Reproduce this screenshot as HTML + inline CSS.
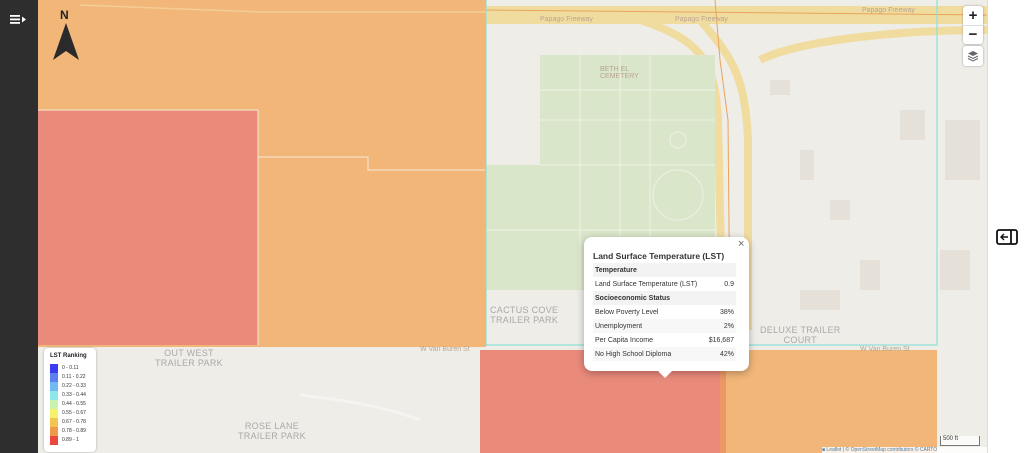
<!DOCTYPE html>
<html><head><meta charset="utf-8"><style>
*{margin:0;padding:0;box-sizing:border-box}
body{width:1025px;height:453px;overflow:hidden;background:#fff;font-family:"Liberation Sans",Arial,sans-serif;position:relative}
.a{position:absolute}
.lbl{position:absolute;font-size:7px;color:#b9a58e}
.big{position:absolute;font-size:9px;color:#a9a9a9;text-align:center;letter-spacing:.3px;line-height:10px}
table{border-collapse:collapse;width:100%;font-size:7px;color:#333}
td{padding:0 2px;height:14px}
tr.h td{font-weight:bold;background:#f3f3f3}
tr.g td{background:#f7f7f7}
td.r{text-align:right}
</style></head><body>
<div class="a" style="left:0;top:0;width:38px;height:453px;background:#2e2e2e"></div>
<svg class="a" style="left:10px;top:14px" width="18" height="12" viewBox="0 0 18 12"><rect x="0" y="1" width="10" height="1.8" fill="#fff"/><rect x="0" y="4.5" width="10" height="1.8" fill="#fff"/><rect x="0" y="8" width="10" height="1.8" fill="#fff"/><path d="M12 2.5L16 5.5L12 8.5Z" fill="#fff"/></svg>

<svg class="a" style="left:38px;top:0" width="949" height="453" viewBox="38 0 949 453">
<rect x="38" y="0" width="949" height="453" fill="#efede8"/>
<rect x="485" y="6" width="502" height="18" fill="#f1dca0"/>
<path d="M640 20 C700 40 715 60 718 120 L722 300 M700 20 C735 60 745 80 748 140 L748 330 M760 60 C800 40 900 30 987 30" stroke="#f1dca0" stroke-width="8" fill="none"/>
<path d="M485 10 L987 15" stroke="#e9a45a" stroke-width="1"/>
<path d="M715 0 L720 60 L728 120 L730 330" stroke="#e9a45a" stroke-width="1" fill="none"/>
<rect x="540" y="55" width="175" height="115" fill="#d9e6c9"/>
<rect x="485" y="165" width="230" height="125" fill="#d9e6c9"/>
<g stroke="#eef2e6" stroke-width="1" fill="none"><circle cx="678" cy="140" r="8"/><circle cx="678" cy="195" r="25"/><path d="M540 90H715M540 120H715M540 165H715M485 230H715M580 55V290M620 55V290M650 55V290"/></g>
<g fill="#e6e1d8"><rect x="770" y="80" width="20" height="15"/><rect x="800" y="150" width="14" height="30"/><rect x="830" y="200" width="20" height="20"/><rect x="900" y="110" width="25" height="30"/><rect x="945" y="120" width="35" height="60"/><rect x="860" y="260" width="20" height="30"/><rect x="800" y="290" width="40" height="20"/><rect x="940" y="250" width="30" height="40"/></g>
<path d="M486 0V345 M937 0V345 M486 345H937" stroke="#8fe0d8" stroke-width="1.2" fill="none"/>
<rect x="38" y="0" width="448" height="347" fill="#f1b678"/>
<rect x="38" y="110" width="220" height="235" fill="#e98a7b"/>
<path d="M38 110H258V345 M258 157H368V170H485" stroke="#f6dfc4" stroke-width="1.2" fill="none"/>
<path d="M80 5L260 12L486 12" stroke="#f4cd95" stroke-width="1.5" fill="none"/>
<rect x="480" y="350" width="245" height="103" fill="#e98a7b"/>
<rect x="725" y="350" width="212" height="103" fill="#f1b678"/>
<rect x="720" y="350" width="6" height="103" fill="#ec9866"/>
<path d="M300 395 C340 400 380 405 420 420" stroke="#f6f4f0" stroke-width="3" fill="none"/>
</svg>

<div class="lbl" style="left:540px;top:16px">Papago Freeway</div>
<div class="lbl" style="left:675px;top:16px">Papago Freeway</div>
<div class="lbl" style="left:862px;top:7px">Papago Freeway</div>
<div class="lbl" style="left:600px;top:66px">BETH EL<br>CEMETERY</div>
<div class="big" style="left:490px;top:305px">CACTUS COVE<br>TRAILER PARK</div>
<div class="big" style="left:760px;top:325px">DELUXE TRAILER<br>COURT</div>
<div class="big" style="left:155px;top:348px">OUT WEST<br>TRAILER PARK</div>
<div class="big" style="left:238px;top:421px">ROSE LANE<br>TRAILER PARK</div>
<div class="lbl" style="left:420px;top:346px">W Van Buren St</div>
<div class="lbl" style="left:860px;top:346px">W Van Buren St</div>

<div class="a" style="left:60px;top:8px;font-weight:bold;font-size:12px;color:#222">N</div>
<svg class="a" style="left:50px;top:22px" width="32" height="40" viewBox="0 0 32 40"><path d="M16 1L29 38L16 29L3 38Z" fill="#2a2a2a"/></svg>

<div class="a" style="left:963px;top:6px;width:20px;height:38px;background:#fff;border-radius:3px;box-shadow:0 0 2px rgba(0,0,0,.35)"></div>
<div class="a" style="left:963px;top:6px;width:20px;height:19px;text-align:center;font-size:15px;font-weight:bold;line-height:19px;color:#222">+</div>
<div class="a" style="left:963px;top:25px;width:20px;height:19px;text-align:center;font-size:15px;font-weight:bold;line-height:17px;color:#222;border-top:1px solid #ddd">−</div>
<div class="a" style="left:963px;top:46px;width:20px;height:20px;background:#fff;border-radius:3px;box-shadow:0 0 2px rgba(0,0,0,.35)"></div>
<svg class="a" style="left:967px;top:50px" width="12" height="12" viewBox="0 0 12 12"><path d="M6 1L11 3.5L6 6L1 3.5Z" fill="#666"/><path d="M1 6L6 8.5L11 6M1 8.5L6 11L11 8.5" stroke="#666" fill="none"/></svg>

<div class="a" style="left:987px;top:0;width:38px;height:453px;background:#fff;border-left:1px solid #ddd"></div>
<svg class="a" style="left:996px;top:229px" width="22" height="16" viewBox="0 0 22 16"><rect x="1" y="1" width="20" height="14" rx="2" stroke="#111" stroke-width="1.8" fill="#fff"/><path d="M15 1V15" stroke="#111" stroke-width="1.8"/><path d="M12 8H5M8 5L5 8L8 11" stroke="#111" stroke-width="1.4" fill="none"/></svg>

<div class="a" style="left:584px;top:237px;width:165px;height:134px;background:#fff;border-radius:8px;box-shadow:0 2px 8px rgba(0,0,0,.3)"></div>
<svg class="a" style="left:656px;top:369px" width="18" height="9"><path d="M0 0L9 9L18 0Z" fill="#fff"/></svg>
<div class="a" style="left:738px;top:238px;font-size:11px;color:#666">×</div>
<div class="a" style="left:593px;top:251px;font-size:8.5px;font-weight:bold;color:#333">Land Surface Temperature (LST)</div>
<div class="a" style="left:593px;top:263px;width:143px">
<table>
<tr class="h"><td colspan="2">Temperature</td></tr>
<tr><td>Land Surface Temperature (LST)</td><td class="r">0.9</td></tr>
<tr class="h"><td colspan="2">Socioeconomic Status</td></tr>
<tr><td>Below Poverty Level</td><td class="r">38%</td></tr>
<tr class="g"><td>Unemployment</td><td class="r">2%</td></tr>
<tr><td>Per Capita Income</td><td class="r">$16,687</td></tr>
<tr class="g"><td>No High School Diploma</td><td class="r">42%</td></tr>
</table></div>

<div class="a" style="left:44px;top:348px;width:52px;height:104px;background:#fff;border-radius:4px;box-shadow:0 0 2px rgba(0,0,0,.3)"></div>
<div class="a" style="left:50px;top:353px;font-size:6px;font-weight:bold;color:#222">LST Ranking</div>
<div class="a" style="left:50px;top:364px;font-size:5px;color:#333;line-height:9px">
<div><span style="display:inline-block;width:8px;height:9px;background:#3b3bf0;vertical-align:top;margin-right:4px"></span>0 - 0.11</div>
<div><span style="display:inline-block;width:8px;height:9px;background:#5b7ef0;vertical-align:top;margin-right:4px"></span>0.11 - 0.22</div>
<div><span style="display:inline-block;width:8px;height:9px;background:#74b8f2;vertical-align:top;margin-right:4px"></span>0.22 - 0.33</div>
<div><span style="display:inline-block;width:8px;height:9px;background:#8ee6ea;vertical-align:top;margin-right:4px"></span>0.33 - 0.44</div>
<div><span style="display:inline-block;width:8px;height:9px;background:#c9f1b0;vertical-align:top;margin-right:4px"></span>0.44 - 0.55</div>
<div><span style="display:inline-block;width:8px;height:9px;background:#f5f36a;vertical-align:top;margin-right:4px"></span>0.55 - 0.67</div>
<div><span style="display:inline-block;width:8px;height:9px;background:#f2c450;vertical-align:top;margin-right:4px"></span>0.67 - 0.78</div>
<div><span style="display:inline-block;width:8px;height:9px;background:#ee9a4a;vertical-align:top;margin-right:4px"></span>0.78 - 0.89</div>
<div><span style="display:inline-block;width:8px;height:9px;background:#e8483e;vertical-align:top;margin-right:4px"></span>0.89 - 1</div>
</div>

<div class="a" style="left:940px;top:436px;width:40px;height:10px;border:1px solid #777;border-top:none;background:rgba(255,255,255,.7);font-size:6px;color:#333;padding-left:2px">500 ft</div>
<div class="a" style="left:822px;top:447px;width:165px;height:6px;background:rgba(255,255,255,.8);font-size:5px;color:#4a7fb0;white-space:nowrap;overflow:hidden">■ Leaflet | © OpenStreetMap contributors © CARTO</div>
</body></html>
